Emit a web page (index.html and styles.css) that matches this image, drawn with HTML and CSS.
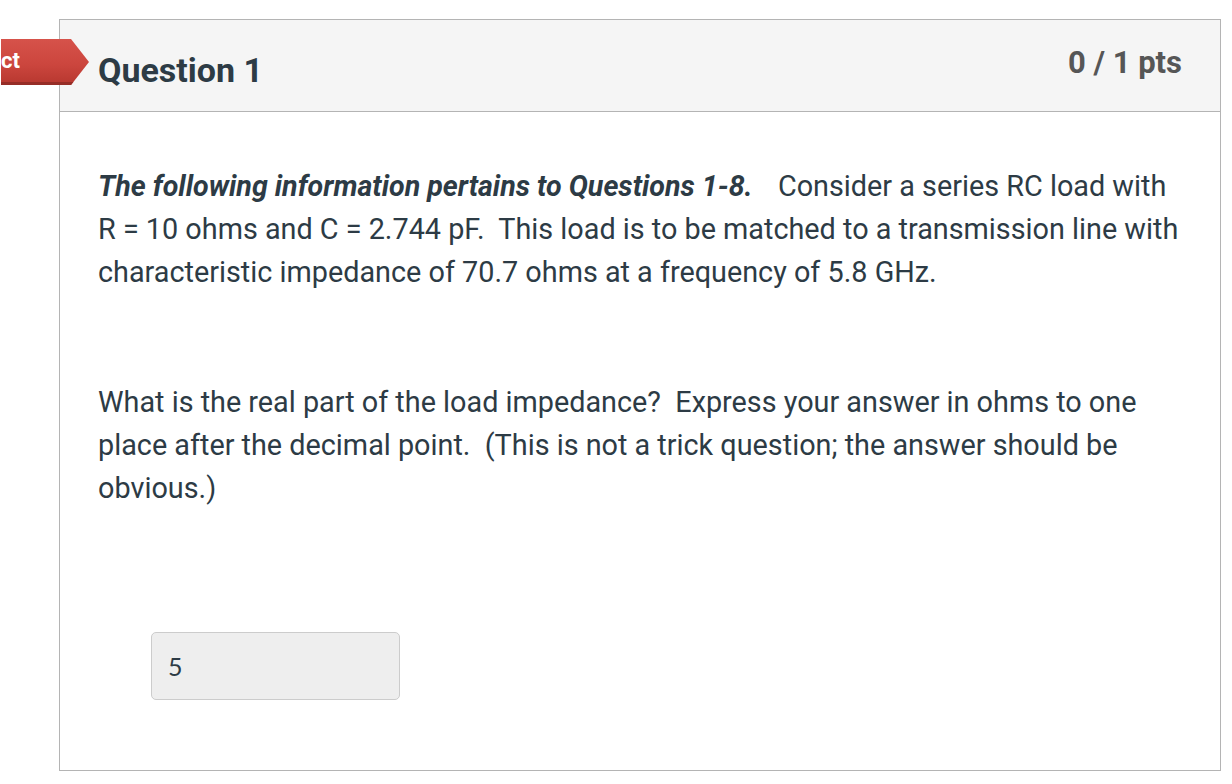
FILE: index.html
```html
<!DOCTYPE html>
<html lang="en">
<head>
<meta charset="utf-8">
<title>Question 1</title>
<link rel="stylesheet" href="styles.css">
</head>
<body>
<div class="page">
  <div class="question">
    <div class="answer-flag"><span>Incorrect</span></div>
    <div class="question-header">
      <h2 class="question-title">Question 1</h2>
      <div class="question-points">0 / 1 pts</div>
    </div>
    <div class="question-body">
      <p class="q-text"><strong class="lead"><em>The following information pertains to Questions 1-8.</em></strong>&nbsp; Consider a series RC load with R = 10 ohms and C = 2.744 pF.&nbsp; This load is to be matched to a transmission line with characteristic impedance of 70.7 ohms at a frequency of 5.8 GHz.</p>
      <p class="q-text q-gap">What is the real part of the load impedance?&nbsp; Express your answer in ohms to one place after the decimal point.&nbsp; (This is not a trick question; the answer should be obvious.)</p>
      <div class="answer-row">
        <div class="answer-input">5</div>
      </div>
    </div>
  </div>
</div>
</body>
</html>
```

FILE: styles.css
```css
html, body {
  margin: 0;
  padding: 0;
  background: #ffffff;
}

.page {
  padding: 19px 0 0 59px;
}

.question {
  position: relative;
  box-sizing: border-box;
  width: 1162px;
  height: 752px;
  border: 1px solid #b4b4b4;
  background: #ffffff;
  font-family: Roboto, "Liberation Sans", Arial, sans-serif;
  color: #2d3b45;
}

.answer-flag {
  position: absolute;
  left: -59px;
  top: 19px;
  width: 88px;
  height: 46px;
  background: linear-gradient(#d6524a 0%, #cc463e 55%, #b6372f 100%);
  clip-path: polygon(0 0, 70px 0, 88px 50%, 70px 100%, 0 100%);
  display: flex;
  align-items: center;
  justify-content: flex-end;
  overflow: hidden;
}

.answer-flag::after {
  content: "";
  position: absolute;
  left: 0;
  right: 0;
  bottom: 0;
  height: 3px;
  background: #962d27;
}

.answer-flag span {
  margin-right: 69px;
  margin-top: -3px;
  font-weight: 700;
  font-size: 22px;
  color: #ffffff;
  white-space: nowrap;
}

.question-header {
  box-sizing: border-box;
  height: 92px;
  background: #f5f5f5;
  border-bottom: 1px solid #b4b4b4;
  display: flex;
  justify-content: space-between;
  align-items: flex-start;
  padding: 0 38px;
}

.question-title {
  margin: 30px 0 0 0;
  font-size: 34px;
  line-height: 40px;
  font-weight: 700;
  color: #2d3b45;
}

.question-points {
  margin-top: 23px;
  font-size: 31px;
  line-height: 40px;
  font-weight: 700;
  color: #565656;
}

.question-body {
  padding: 53px 38px 0 38px;
}

.q-text {
  margin: 0;
  font-size: 28.8px;
  line-height: 43px;
  color: #2d3b45;
}

.q-text strong {
  font-weight: 700;
}

.lead {
  font-size: 28.6px;
  margin-right: 11px;
}

.q-gap {
  margin-top: 87px;
}

.answer-row {
  margin-top: 122px;
  padding-left: 53px;
}

.answer-input {
  box-sizing: border-box;
  width: 249px;
  height: 68px;
  background: #eeeeee;
  border: 1px solid #cccccc;
  border-radius: 5px;
  padding-left: 16px;
  display: flex;
  align-items: center;
  font-family: Lato, "Open Sans", sans-serif;
  font-size: 25px;
  color: #2d3b45;
}
```
